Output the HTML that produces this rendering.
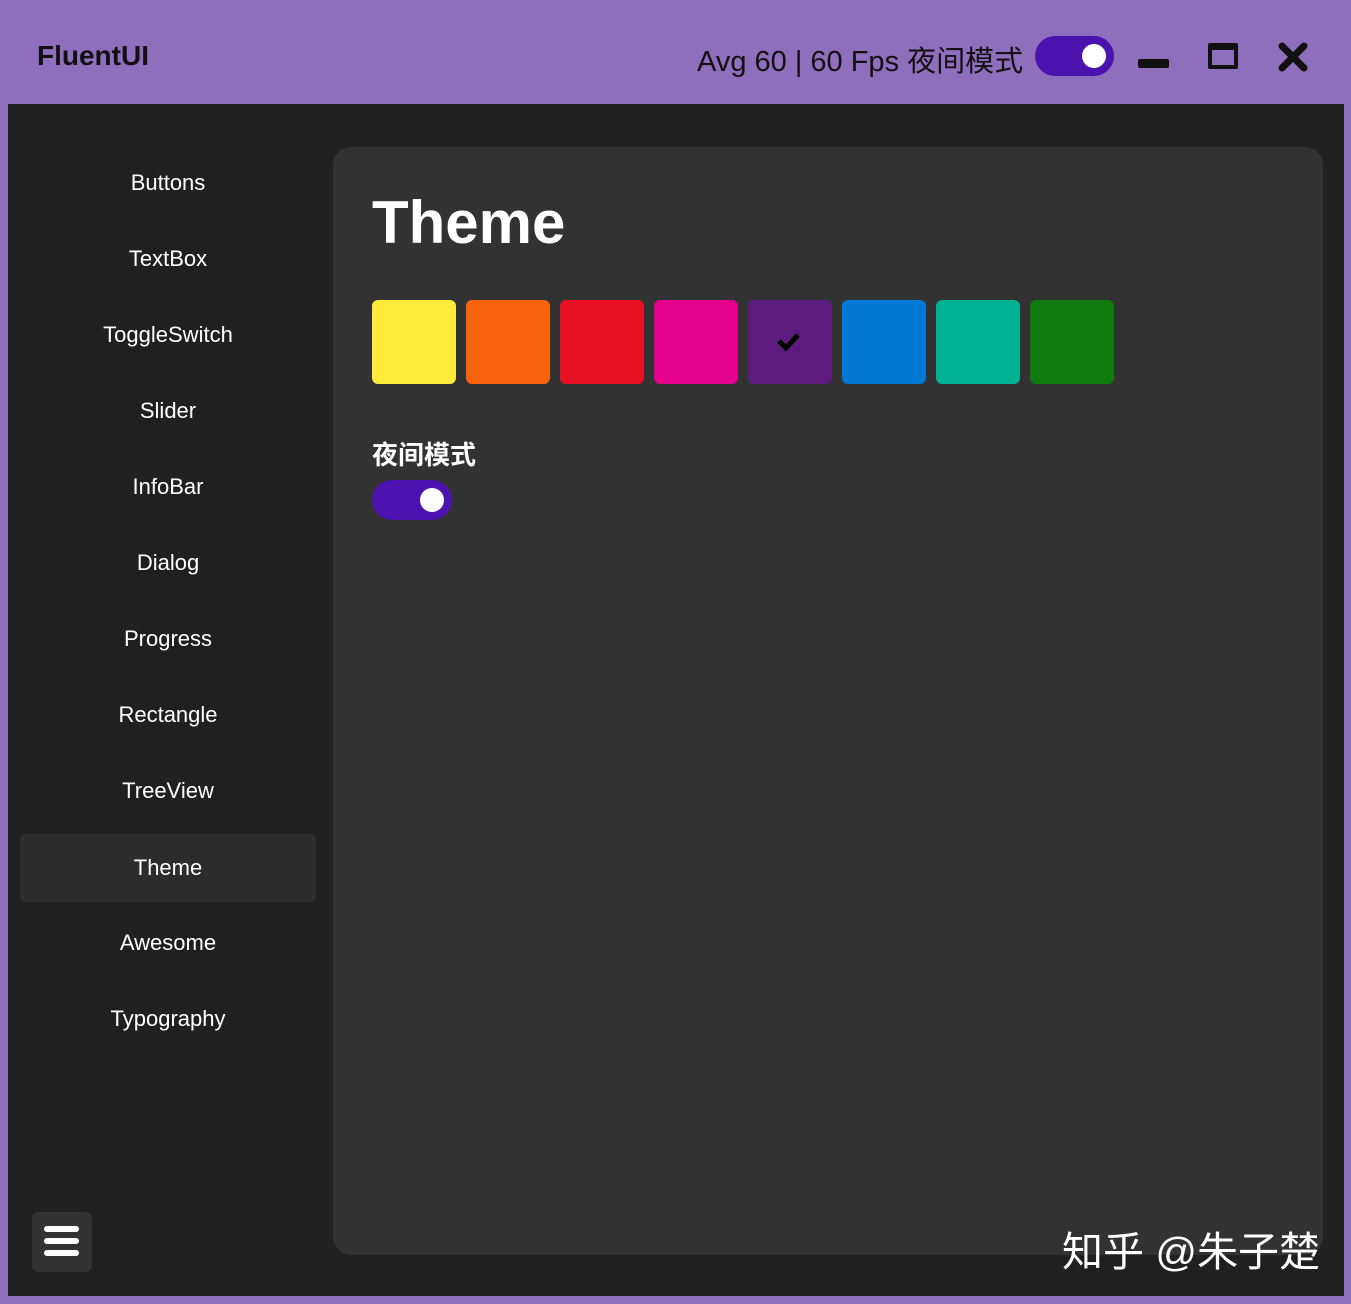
<!DOCTYPE html>
<html><head><meta charset="utf-8"><style>
*{margin:0;padding:0;box-sizing:border-box}
body{width:1351px;height:1304px;background:#8e6fbd;position:relative;overflow:hidden;font-family:"Liberation Sans","Noto Sans CJK SC",sans-serif}
.title{position:absolute;left:37px;top:40px;font-size:28px;font-weight:bold;color:#111}
.main{position:absolute;left:8px;top:104px;width:1336px;height:1192px;background:#202020}
.nav{position:absolute;left:20px;width:296px;height:68px;color:#fff;font-size:22px;text-align:center;line-height:68px}
.sel{background:#2c2c2c;border-radius:6px}
.panel{position:absolute;left:333px;top:147px;width:990px;height:1108px;background:#323232;border-radius:18px}
.sw{position:absolute;top:300px;width:84px;height:84px;border-radius:6px}
</style></head><body>
<div class="title">FluentUI</div>
<div style="position:absolute;left:697px;top:38px;font-size:29px;color:#111">Avg 60 | 60 Fps 夜间模式</div>
<div style="position:absolute;left:1035px;top:36px;width:79px;height:40px;border-radius:20px;background:#4c12b0"><div style="position:absolute;right:8px;top:8px;width:24px;height:24px;border-radius:50%;background:#fff"></div></div>
<div style="position:absolute;left:1138px;top:59px;width:31px;height:9px;background:#111;border-radius:2px"></div>
<div style="position:absolute;left:1208px;top:43px;width:30px;height:26px;border:4px solid #111;border-top-width:7px;border-radius:2px"></div>
<svg style="position:absolute;left:1278px;top:42px" width="30" height="30"><path d="M4 4L26 26M26 4L4 26" stroke="#111" stroke-width="7" stroke-linecap="round"/></svg>
<div class="main"></div>
<div class="nav" style="top:149px">Buttons</div>
<div class="nav" style="top:225px">TextBox</div>
<div class="nav" style="top:301px">ToggleSwitch</div>
<div class="nav" style="top:377px">Slider</div>
<div class="nav" style="top:453px">InfoBar</div>
<div class="nav" style="top:529px">Dialog</div>
<div class="nav" style="top:605px">Progress</div>
<div class="nav" style="top:681px">Rectangle</div>
<div class="nav" style="top:757px">TreeView</div>
<div class="nav sel" style="top:834px">Theme</div>
<div class="nav" style="top:909px">Awesome</div>
<div class="nav" style="top:985px">Typography</div>
<div style="position:absolute;left:32px;top:1212px;width:60px;height:60px;background:#323232;border-radius:6px">
<div style="position:absolute;left:12px;top:14px;width:35px;height:6px;background:#fff;border-radius:3px"></div>
<div style="position:absolute;left:12px;top:26px;width:35px;height:6px;background:#fff;border-radius:3px"></div>
<div style="position:absolute;left:12px;top:38px;width:35px;height:6px;background:#fff;border-radius:3px"></div></div>
<div class="panel"></div>
<div style="position:absolute;left:372px;top:188px;font-size:60px;font-weight:bold;color:#fff">Theme</div>
<div class="sw" style="left:372px;background:#ffeb3b"></div>
<div class="sw" style="left:466px;background:#f7630c"></div>
<div class="sw" style="left:560px;background:#e81123"></div>
<div class="sw" style="left:654px;background:#e3008c"></div>
<div class="sw" style="left:748px;background:#5c1c7d"><svg width="84" height="84"><path d="M31 41L38 48L50 35" stroke="#000" stroke-width="5" fill="none"/></svg></div>
<div class="sw" style="left:842px;background:#0078d4"></div>
<div class="sw" style="left:936px;background:#00b294"></div>
<div class="sw" style="left:1030px;background:#107c10"></div>
<div style="position:absolute;left:372px;top:435px;font-size:26px;font-weight:bold;color:#fff">夜间模式</div>
<div style="position:absolute;left:372px;top:480px;width:80px;height:40px;border-radius:20px;background:#4c12b0"><div style="position:absolute;right:8px;top:8px;width:24px;height:24px;border-radius:50%;background:#fff"></div></div>
<div style="position:absolute;left:1062px;top:1218px;font-size:41px;color:#fff">知乎 @朱子楚</div>
</body></html>
